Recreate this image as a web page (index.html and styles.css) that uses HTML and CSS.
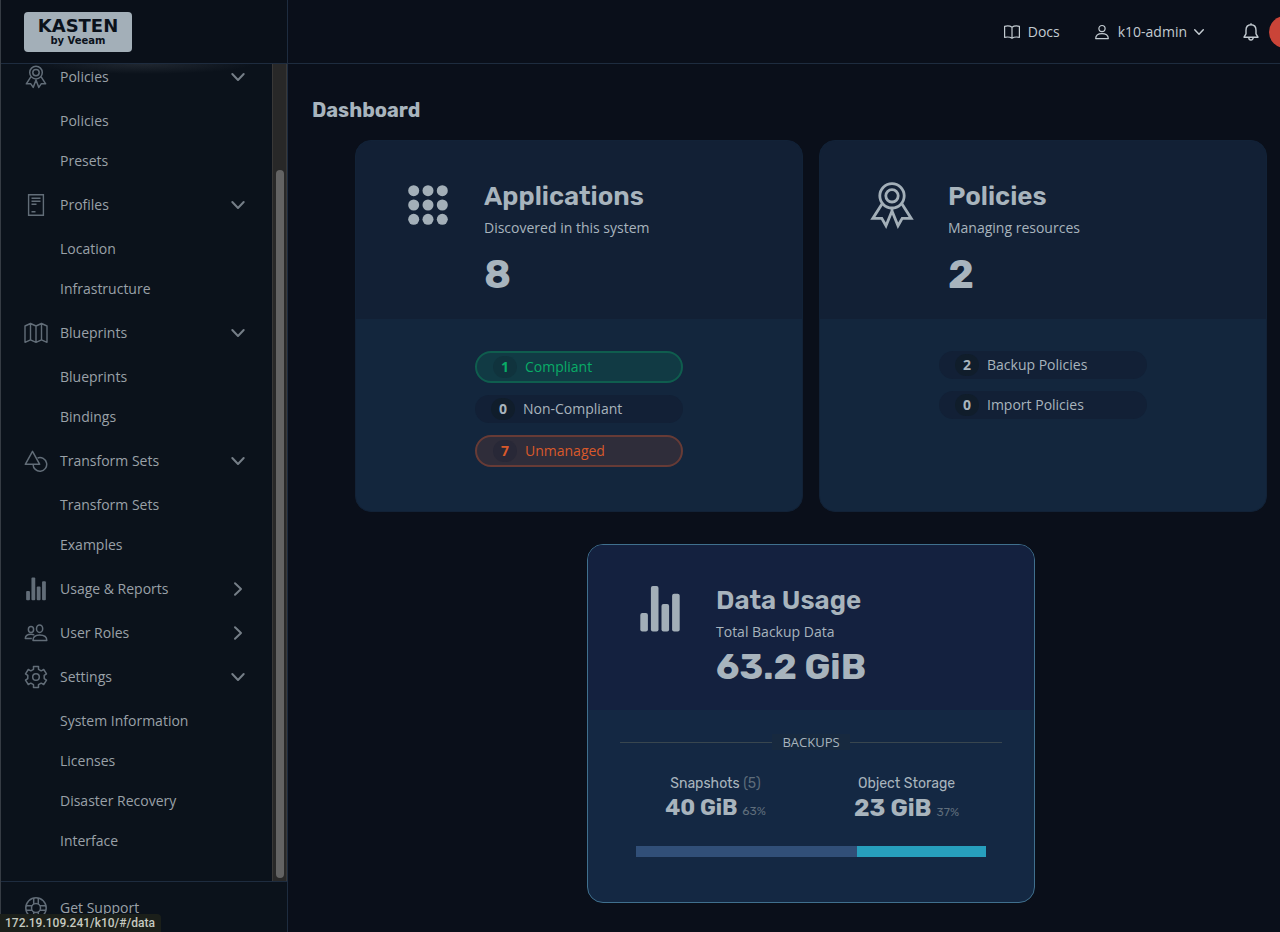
FILE: index.html
```html
<!DOCTYPE html>
<html lang="en">
<head>
<meta charset="utf-8">
<title>Dashboard</title>
<link rel="stylesheet" href="styles.css">
</head>
<body>
<svg class="sprite" aria-hidden="true">
  <symbol id="ribbon" viewBox="0 0 24 24"><g fill="none" stroke="currentColor" stroke-width="1.500" stroke-linejoin="round"><circle cx="12" cy="7.600" r="6.300"/><circle cx="12" cy="7.600" r="3.200"/><path d="M7 11.600 2.300 18.800h4.500L9.200 22.400 12 15 14.800 22.400 17.200 18.800h4.500L17 11.600"/></g></symbol>
  <symbol id="ribbon-lg" viewBox="0 0 48 48"><g fill="none" stroke="currentColor" stroke-width="2.800"><circle cx="24" cy="14.800" r="12.200"/><circle cx="24" cy="14.800" r="6.200"/><path d="M14.300 22.400 4.800 37.400h9L18 44.800 24 30M24 27.500v2.500l6 14.800 4.200-7.400h9L33.700 22.400"/></g></symbol>
  <symbol id="bars" viewBox="0 0 48 48"><g fill="currentColor"><rect x="4.300" y="28" width="7.600" height="18.500" rx="2"/><rect x="14.900" y="1" width="7.600" height="45.500" rx="2"/><rect x="25.500" y="19" width="7.600" height="27.500" rx="2"/><rect x="36.100" y="8.700" width="7.600" height="37.800" rx="2"/></g></symbol>
  <symbol id="dots" viewBox="0 0 48 48"><g fill="currentColor"><circle cx="9.700" cy="9.700" r="5.500"/><circle cx="24" cy="9.700" r="5.500"/><circle cx="38.300" cy="9.700" r="5.500"/><circle cx="9.700" cy="24" r="5.500"/><circle cx="24" cy="24" r="5.500"/><circle cx="38.300" cy="24" r="5.500"/><circle cx="9.700" cy="38.300" r="5.500"/><circle cx="24" cy="38.300" r="5.500"/><circle cx="38.300" cy="38.300" r="5.500"/></g></symbol>
  <symbol id="profile" viewBox="0 0 24 24"><path fill="none" stroke="currentColor" stroke-width="1.400" d="M4.600 1.800h14.800v20.400H4.600zM7.500 5.300h9M7.500 8.300h9M7.500 11.300h5M7.500 18.800h4"/></symbol>
  <symbol id="map" viewBox="0 0 24 24"><path fill="none" stroke="currentColor" stroke-linejoin="round" stroke-width="1.400" d="M1 21.300V5L6.500 2.500 12 5l5.500-2.500L23 5v16.300l-5.500-2.500-5.500 2.500-5.500-2.500zM6.500 2.500v16.300M12 5v16.300M17.500 2.500v16.300"/></symbol>
  <symbol id="shapes" viewBox="0 0 24 24"><g fill="none" stroke="currentColor" stroke-width="1.500" stroke-linejoin="round"><path d="M8.500 2.300 1.300 15.300h14.400z"/><path d="M13.600 9a6.800 6.800 0 1 1-4.500 6.300"/></g></symbol>
  <symbol id="users" viewBox="0 0 24 24"><g fill="none" stroke="currentColor" stroke-width="1.500" stroke-linejoin="round"><ellipse cx="15.600" cy="7.700" rx="3.100" ry="3.700"/><ellipse cx="7" cy="8.500" rx="2.600" ry="3"/><path d="M9 19.400c0-3.600 2.800-5.300 6.600-5.300s7.200 1.700 7.200 5.300zM7.800 17.500H1.300c0-2.800 2-4.200 5.700-4.200 1.200 0 2.300.2 3.200.6"/></g></symbol>
  <symbol id="gear" viewBox="0 0 24 24"><g fill="none" stroke="currentColor" stroke-width="1.500" stroke-linejoin="round"><circle cx="12" cy="12" r="3.300"/><path d="M9.500 1.500h5v2.800l2.700 1.500 2.500-1.300 2.800 4.300-2.300 1.600v3.200l2.300 1.600-2.800 4.300-2.500-1.300-2.700 1.500v2.800h-5v-2.800l-2.700-1.500-2.500 1.300-2.800-4.300 2.300-1.600v-3.200L1.500 8.800l2.800-4.300 2.500 1.300 2.700-1.500z"/></g></symbol>
  <symbol id="support" viewBox="0 0 24 24"><g fill="none" stroke="currentColor" stroke-width="1.500"><circle cx="12" cy="12" r="10.200"/><circle cx="12" cy="12" r="4.500"/><path d="M9.700 1.900v6.200M14.300 1.900v6.200M9.700 22.100v-6.200M14.300 22.100v-6.200M1.900 9.700h6.200M1.900 14.300h6.200M22.100 9.700h-6.200M22.100 14.300h-6.200"/></g></symbol>
  <symbol id="chevron" viewBox="0 0 16 16"><path fill="none" stroke="currentColor" stroke-width="2" stroke-linecap="round" stroke-linejoin="round" d="M2.300 5 8 11l5.700-6"/></symbol>
  <symbol id="book" viewBox="0 0 16 16"><path fill="none" stroke="currentColor" stroke-width="1.200" stroke-linejoin="round" d="M8 3.200C6 1.800 3 1.800.6 2.300v11c2.600-.5 5.400-.4 7.400.9 2-1.300 4.800-1.400 7.400-.9v-11C13 1.800 10 1.800 8 3.200zv11"/></symbol>
  <symbol id="user" viewBox="0 0 16 16"><g fill="none" stroke="currentColor" stroke-width="1.200" stroke-linejoin="round"><circle cx="8" cy="4.600" r="3.100"/><path d="M1.700 14.600c0-3.400 2.600-5 6.300-5s6.300 1.600 6.300 5z"/></g></symbol>
  <symbol id="bell" viewBox="0 0 20 20"><g fill="none" stroke="currentColor" stroke-width="1.400" stroke-linejoin="round"><path d="M10 2.800c-3.300 0-5 2.400-5 5.400v3.600l-2 3.400h14l-2-3.400V8.200c0-3-1.700-5.400-5-5.400zM10 2.800V1.200M7.800 15.400a2.200 2.600 0 0 0 4.400 0"/></g></symbol>
</svg>
<div class="app">
  <aside class="sidebar">
    <div class="brand">
      <a class="logo" href="#"><span class="logo-name">KASTEN</span><span class="logo-by">by Veeam</span></a>
    </div>
    <div class="scroller">
      <nav class="menu">
        <div class="group">
          <button class="row" aria-expanded="true"><svg class="icon"><use href="#ribbon"/></svg><span class="label">Policies</span><svg class="chev"><use href="#chevron"/></svg></button>
          <div class="sub"><a href="#">Policies</a><a href="#">Presets</a></div>
        </div>
        <div class="group">
          <button class="row" aria-expanded="true"><svg class="icon"><use href="#profile"/></svg><span class="label">Profiles</span><svg class="chev"><use href="#chevron"/></svg></button>
          <div class="sub"><a href="#">Location</a><a href="#">Infrastructure</a></div>
        </div>
        <div class="group">
          <button class="row" aria-expanded="true"><svg class="icon"><use href="#map"/></svg><span class="label">Blueprints</span><svg class="chev"><use href="#chevron"/></svg></button>
          <div class="sub"><a href="#">Blueprints</a><a href="#">Bindings</a></div>
        </div>
        <div class="group">
          <button class="row" aria-expanded="true"><svg class="icon"><use href="#shapes"/></svg><span class="label">Transform Sets</span><svg class="chev"><use href="#chevron"/></svg></button>
          <div class="sub"><a href="#">Transform Sets</a><a href="#">Examples</a></div>
        </div>
        <button class="row" aria-expanded="false"><svg class="icon"><use href="#bars"/></svg><span class="label">Usage &amp; Reports</span><svg class="chev closed"><use href="#chevron"/></svg></button>
        <button class="row" aria-expanded="false"><svg class="icon"><use href="#users"/></svg><span class="label">User Roles</span><svg class="chev closed"><use href="#chevron"/></svg></button>
        <div class="group">
          <button class="row" aria-expanded="true"><svg class="icon"><use href="#gear"/></svg><span class="label">Settings</span><svg class="chev"><use href="#chevron"/></svg></button>
          <div class="sub"><a href="#">System Information</a><a href="#">Licenses</a><a href="#">Disaster Recovery</a><a href="#">Interface</a></div>
        </div>
      </nav>
      <div class="track"><div class="thumb"></div></div>
    </div>
    <div class="support">
      <a class="row" href="#"><svg class="icon"><use href="#support"/></svg><span class="label">Get Support</span></a>
    </div>
  </aside>

  <div class="page">
    <header class="topbar">
      <a class="top-link" href="#"><svg class="top-icon"><use href="#book"/></svg>Docs</a>
      <button class="top-link user"><svg class="top-icon"><use href="#user"/></svg>k10-admin<svg class="caret"><use href="#chevron"/></svg></button>
      <button class="bell" aria-label="Notifications"><svg><use href="#bell"/></svg></button>
      <span class="avatar"></span>
    </header>
    <main>
      <h1>Dashboard</h1>
      <div class="cards">
        <section class="card">
          <div class="card-head">
            <svg class="card-icon"><use href="#dots"/></svg>
            <div><h2>Applications</h2><p class="desc">Discovered in this system</p><p class="figure">8</p></div>
          </div>
          <div class="card-body">
            <ul class="pills">
              <li class="pill ok"><b>1</b>Compliant</li>
              <li class="pill"><b>0</b>Non-Compliant</li>
              <li class="pill warn"><b>7</b>Unmanaged</li>
            </ul>
          </div>
        </section>
        <section class="card">
          <div class="card-head">
            <svg class="card-icon"><use href="#ribbon-lg"/></svg>
            <div><h2>Policies</h2><p class="desc">Managing resources</p><p class="figure">2</p></div>
          </div>
          <div class="card-body">
            <ul class="pills">
              <li class="pill"><b>2</b>Backup Policies</li>
              <li class="pill"><b>0</b>Import Policies</li>
            </ul>
          </div>
        </section>
        <section class="card active">
          <div class="card-head">
            <svg class="card-icon"><use href="#bars"/></svg>
            <div><h2>Data Usage</h2><p class="desc">Total Backup Data</p><p class="figure total">63.2 GiB</p></div>
          </div>
          <div class="card-body usage">
            <h3 class="divider"><span>BACKUPS</span></h3>
            <div class="stats">
              <div class="stat"><p class="stat-name">Snapshots <span class="dim">(5)</span></p><p class="stat-value">40 GiB <span class="dim">63%</span></p></div>
              <div class="stat large"><p class="stat-name">Object Storage</p><p class="stat-value">23 GiB <span class="dim">37%</span></p></div>
            </div>
            <div class="meter"><span class="snap" style="width:63%"></span><span class="object" style="width:37%"></span></div>
          </div>
        </section>
      </div>
    </main>
  </div>
</div>
<div class="status">172.19.109.241/k10/#/data</div>
</body>
</html>
```
FILE: styles.css
```css
* { box-sizing: border-box; }
body {
  margin: 0;
  background: #0a0f1a;
  color: #a8b4bd;
  font: 14px/20px "Open Sans", "Noto Sans", sans-serif;
}
h1, h2, h3, p, ul { margin: 0; padding: 0; }
ul { list-style: none; }
a { color: inherit; text-decoration: none; }
button { border: 0; padding: 0; background: none; color: inherit; font: inherit; cursor: pointer; }
.sprite { display: none; }

.app { display: flex; height: 100vh; overflow: hidden; }

/* Sidebar */
.sidebar {
  display: flex;
  flex-direction: column;
  flex: 0 0 288px;
  border-left: 1px solid #363c44;
  border-right: 1px solid #1e2c3f;
  background: #0b121b;
  color: #9aa1a8;
}
.brand {
  flex: none;
  height: 64px;
  padding: 12px 23px;
  border-bottom: 1px solid #1e2c3f;
  background: #0a1019;
}
.logo {
  display: flex;
  flex-direction: column;
  align-items: center;
  justify-content: center;
  width: 108px;
  height: 40px;
  border-radius: 4px;
  background: #a3afb8;
  color: #0b121b;
  font-family: "DejaVu Sans", sans-serif;
  font-weight: bold;
}
.logo-name { font-size: 18px; line-height: 18px; }
.logo-by { font-size: 10px; line-height: 12px; }
.scroller {
  display: flex;
  flex: 1;
  min-height: 0;
  overflow: hidden;
  background: radial-gradient(ellipse 110px 10px at 50% 0, #202730, transparent);
}
.menu {
  display: flex;
  flex-direction: column;
  justify-content: flex-end;
  flex: 1;
  padding-bottom: 18px;
}
.menu > * { flex: none; }
.row {
  display: flex;
  align-items: center;
  width: 100%;
  height: 44px;
  padding: 0 26px 0 23px;
  text-align: left;
}
.icon { flex: none; width: 24px; height: 24px; margin-right: 12px; color: #626d78; }
.label { flex: 1; }
.chev { width: 16px; height: 16px; color: #757e87; }
.closed { transform: rotate(-90deg); }
.sub { display: flex; flex-direction: column; padding: 2px 0; }
.sub a { padding: 10px 12px 10px 59px; }
.track {
  display: flex;
  align-items: flex-end;
  justify-content: center;
  width: 15px;
  padding-bottom: 3px;
  border-left: 1px solid #393837;
  border-right: 1px solid #393837;
  background: #282828;
}
.thumb { width: 8px; height: 87%; border-radius: 4px; background: #636363; }
.support { flex: none; height: 51px; padding-top: 4px; border-top: 1px solid #1e2c3f; }

/* Top bar */
.page { flex: 1; min-width: 0; overflow: hidden; }
.topbar {
  display: flex;
  align-items: center;
  justify-content: flex-end;
  height: 64px;
  border-bottom: 1px solid #1e2c3f;
  color: #c3cbd1;
}
.top-link { display: flex; align-items: center; gap: 8px; }
.top-icon { width: 16px; height: 16px; }
.user { margin-left: 34px; }
.caret { width: 12px; height: 12px; margin-left: -2px; }
.bell { display: flex; margin: 0 8px 0 36px; }
.bell svg { width: 20px; height: 20px; }
.avatar { flex: none; width: 32px; height: 32px; margin-right: -21px; border-radius: 50%; background: #ca4438; }

/* Dashboard */
h1, h2, .figure, .stats { font-family: Rubik, Inter, sans-serif; }
h1 { padding: 34px 24px 18px; font-size: 20px; line-height: 24px; }
.cards {
  display: flex;
  flex-wrap: wrap;
  justify-content: center;
  gap: 32px 16px;
  padding: 0 12px 24px 66px;
}
.card {
  display: flex;
  flex-direction: column;
  width: 448px;
  border: 1px solid #122237;
  border-radius: 16px;
  overflow: hidden;
  background: #13263d;
}
.card-head {
  display: flex;
  gap: 32px;
  padding: 40px 48px 24px;
  background: #122035;
}
.card-icon { flex: none; width: 48px; height: 48px; color: #a3afb8; }
h2 { font-size: 26px; font-weight: 600; line-height: 32px; }
.desc { padding: 5px 0; }
.figure { height: 52px; font-size: 40px; font-weight: bold; line-height: 64px; }
.card-body { flex: 1; min-height: 192px; padding: 32px; }
.pills { display: flex; flex-direction: column; gap: 12px; width: 208px; margin: 0 auto; }
.pill {
  display: flex;
  align-items: center;
  gap: 8px;
  padding: 3px 16px;
  border-radius: 16px;
  background: #122036;
}
.pill b { width: 24px; border-radius: 11px; background: #101d2b; line-height: 22px; text-align: center; }
.ok { border: 2px solid #0f5d4e; background: #113a44; color: #09ac67; }
.ok b { background: #10333d; }
.warn { border: 2px solid #673b36; background: #2f2d3a; color: #d9592a; }
.warn b { background: #282837; }

/* Data usage card */
.active { border-color: #40708e; background: #142843; }
.active .card-head { background: #14213f; }
.total { height: 39px; font-size: 36px; line-height: 40px; }
.usage { padding-top: 24px; }
.divider { display: flex; align-items: center; font-size: 13px; font-weight: 400; line-height: 16px; }
.divider::before, .divider::after { content: ""; flex: 1; height: 1px; background: #38464f; }
.divider span { padding: 0 10px; background: #17293f; }
.stats { display: flex; padding-top: 24px; text-align: center; }
.stat { flex: 1; }
.stat-name { font-size: 14px; line-height: 20px; }
.stat-value { font-size: 22px; font-weight: bold; line-height: 28px; }
.large .stat-value { font-size: 24px; }
.dim { color: #5f6d7b; font-weight: 400; }
.stat-value .dim { font-size: 12px; }
.meter { display: flex; height: 11px; margin: 20px 16px 0; }
.snap { background: #314f78; }
.object { background: #279fbd; }

/* Link preview */
.status {
  position: fixed;
  left: 0;
  bottom: 0;
  padding: 1px 6px 1px 5px;
  border-radius: 0 4px 0 0;
  background: #1b1f1a;
  color: #c6cac0;
  font: 500 12px/16px Roboto, Inter, sans-serif;
}
```
